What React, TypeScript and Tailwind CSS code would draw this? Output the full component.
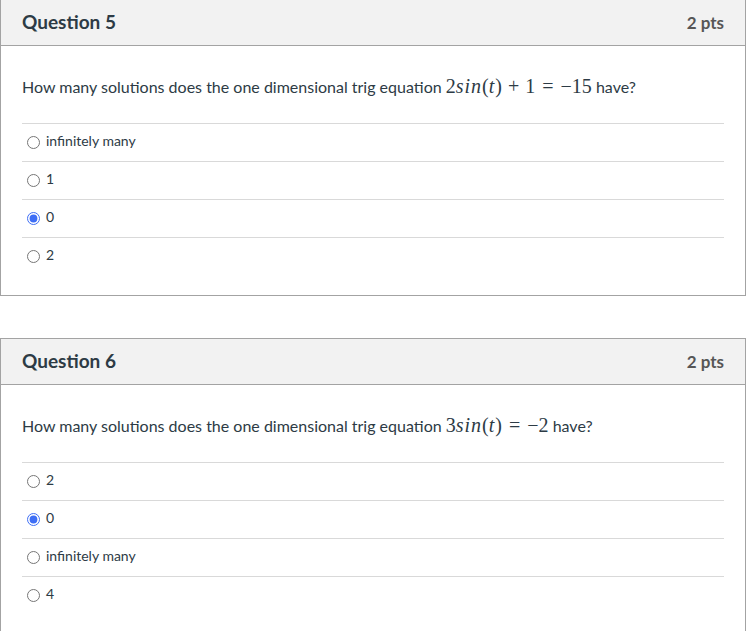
import React from 'react';

type Answer = { label: string; checked?: boolean };

type Question = {
  id: number;
  title: string;
  points: string;
  prefix: string;
  math: React.ReactNode;
  answers: Answer[];
};

const MathText: React.FC<{ children: React.ReactNode }> = ({ children }) => (
  <span className="text-[20px] leading-none" style={{ fontFamily: '"Liberation Serif", "DejaVu Serif", serif' }}>
    {children}
  </span>
);

const I: React.FC<{ children: React.ReactNode }> = ({ children }) => <i className="italic tracking-[1px]">{children}</i>;
const Bin: React.FC<{ children: React.ReactNode }> = ({ children }) => <span className="mx-[6px]">{children}</span>;
const Rel: React.FC<{ children: React.ReactNode }> = ({ children }) => <span className="mx-[7px]">{children}</span>;

const questions: Question[] = [
  {
    id: 5,
    title: 'Question 5',
    points: '2 pts',
    prefix: 'How many solutions does the one dimensional trig equation ',
    math: (
      <MathText>
        2<I>sin</I>(<I>t</I>)<Bin>+</Bin>1<Rel>=</Rel>−15
      </MathText>
    ),
    answers: [{ label: 'infinitely many' }, { label: '1' }, { label: '0', checked: true }, { label: '2' }],
  },
  {
    id: 6,
    title: 'Question 6',
    points: '2 pts',
    prefix: 'How many solutions does the one dimensional trig equation ',
    math: (
      <MathText>
        3<I>sin</I>(<I>t</I>)<Rel>=</Rel>−2
      </MathText>
    ),
    answers: [{ label: '2' }, { label: '0', checked: true }, { label: 'infinitely many' }, { label: '4' }],
  },
];

// Single quiz question card
const QuestionCard: React.FC<{ q: Question; className?: string }> = ({ q, className = '' }) => (
  <div className={`w-[746px] border border-[#a3a3a3] bg-white ${className}`}>
    <div className="h-[46px] flex items-center justify-between px-[21px] bg-[#f2f2f2] border-b border-[#a3a3a3]">
      <h2 className="text-[19px] font-bold text-[#2d3b45]">{q.title}</h2>
      <span className="text-[17px] font-bold text-[#565656]">{q.points}</span>
    </div>
    <div className="px-[21px] pt-[30px] pb-[20px]">
      <p className="text-[16px] leading-[22px] text-[#2d3b45] mb-[25px]">
        {q.prefix}
        {q.math} have?
      </p>
      <div>
        {q.answers.map((a, i) => (
          <label key={i} className="h-[38px] flex items-center border-t border-[#d9d9d9] cursor-pointer">
            <input
              type="radio"
              name={`q${q.id}`}
              defaultChecked={a.checked}
              className="w-[13px] h-[13px] ml-[5px] mr-[6px] accent-[#3e6ef5]"
            />
            <span className="text-[14px] text-[#2d3b45] mb-[4px]">{a.label}</span>
          </label>
        ))}
      </div>
    </div>
  </div>
);

export default function App() {
  return (
    <div className="min-h-screen bg-white" style={{ fontFamily: 'Lato, "Open Sans", sans-serif' }}>
      <QuestionCard q={questions[0]} className="-mt-px" />
      <QuestionCard q={questions[1]} className="mt-[42px]" />
    </div>
  );
}
